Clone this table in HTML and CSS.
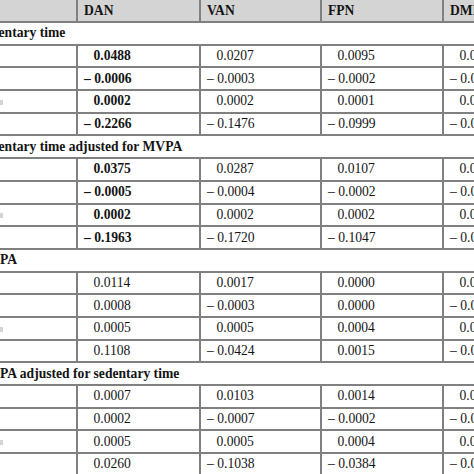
FILE: index.html
```html
<!DOCTYPE html>
<html>
<head>
<meta charset="utf-8">
<link rel="stylesheet" href="styles.css">
</head>
<body>
<div class="wrap">
<table class="grid">
<colgroup>
<col class="c0"><col class="c1"><col class="c2"><col class="c3"><col class="c4">
</colgroup>
<thead>
<tr class="head"><th></th><th>DAN</th><th>VAN</th><th>FPN</th><th>DMN</th></tr>
</thead>
<tbody>
<tr><td class="sec" colspan="5">Sedentary time</td></tr>
<tr><td class="lab"></td><td class="b p">0.0488</td><td class="p">0.0207</td><td class="p">0.0095</td><td class="p">0.0121</td></tr>
<tr><td class="lab"></td><td class="b">– 0.0006</td><td>– 0.0003</td><td>– 0.0002</td><td>– 0.0002</td></tr>
<tr><td class="lab"><span class="mark"></span></td><td class="b p">0.0002</td><td class="p">0.0002</td><td class="p">0.0001</td><td class="p">0.0001</td></tr>
<tr><td class="lab"></td><td class="b">– 0.2266</td><td>– 0.1476</td><td>– 0.0999</td><td>– 0.0812</td></tr>

<tr><td class="sec" colspan="5">Sedentary time adjusted for MVPA</td></tr>
<tr><td class="lab"></td><td class="b p">0.0375</td><td class="p">0.0287</td><td class="p">0.0107</td><td class="p">0.0133</td></tr>
<tr><td class="lab"></td><td class="b">– 0.0005</td><td>– 0.0004</td><td>– 0.0002</td><td>– 0.0002</td></tr>
<tr><td class="lab"><span class="mark"></span></td><td class="b p">0.0002</td><td class="p">0.0002</td><td class="p">0.0002</td><td class="p">0.0001</td></tr>
<tr><td class="lab"></td><td class="b">– 0.1963</td><td>– 0.1720</td><td>– 0.1047</td><td>– 0.0764</td></tr>

<tr><td class="sec" colspan="5">MVPA</td></tr>
<tr><td class="lab"></td><td class="p">0.0114</td><td class="p">0.0017</td><td class="p">0.0000</td><td class="p">0.0031</td></tr>
<tr><td class="lab"></td><td class="p">0.0008</td><td>– 0.0003</td><td class="p">0.0000</td><td>– 0.0001</td></tr>
<tr><td class="lab"><span class="mark"></span></td><td class="p">0.0005</td><td class="p">0.0005</td><td class="p">0.0004</td><td class="p">0.0002</td></tr>
<tr><td class="lab"></td><td class="p">0.1108</td><td>– 0.0424</td><td class="p">0.0015</td><td>– 0.0215</td></tr>

<tr><td class="sec" colspan="5">MVPA adjusted for sedentary time</td></tr>
<tr><td class="lab"></td><td class="p">0.0007</td><td class="p">0.0103</td><td class="p">0.0014</td><td class="p">0.0052</td></tr>
<tr><td class="lab"></td><td class="p">0.0002</td><td>– 0.0007</td><td>– 0.0002</td><td>– 0.0003</td></tr>
<tr><td class="lab"><span class="mark"></span></td><td class="p">0.0005</td><td class="p">0.0005</td><td class="p">0.0004</td><td class="p">0.0002</td></tr>
<tr><td class="lab"></td><td class="p">0.0260</td><td>– 0.1038</td><td>– 0.0384</td><td>– 0.0517</td></tr>
</tbody>
</table>
</div>
</body>
</html>
```
FILE: styles.css
```css
html, body {
  margin: 0;
  padding: 0;
  background: #ffffff;
}
body {
  overflow: hidden;
  font-family: "Liberation Serif", "Times New Roman", serif;
  font-size: 13.6px;
  color: #141414;
}
.wrap {
  width: 474px;
  height: 474px;
  overflow: hidden;
}
.grid {
  border-collapse: collapse;
  table-layout: fixed;
  width: 565px;
}
.c0 { width: 77px; }
.c1 { width: 123px; }
.c2 { width: 121px; }
.c3 { width: 122px; }
.c4 { width: 122px; }

.grid th,
.grid td {
  padding: 0 0 0 6px;
  text-align: left;
  vertical-align: middle;
  white-space: nowrap;
  overflow: hidden;
  border: 2px solid #808080;
  line-height: 14px;
}
.grid tr { height: 22.7px; }
.grid tr.head { height: 22px; }
.grid th {
  background: #d4d4d4;
  font-weight: bold;
  border-top: none;
}
.grid th:first-child,
.grid td:first-child {
  border-left: none;
}
.grid td.sec {
  font-weight: bold;
  padding-left: 0;
  text-indent: -22.6px;
  overflow: visible;
}
.grid td.p { padding-left: 15.5px; }
.grid td.b { font-weight: bold; }
.grid td.lab { padding-left: 0; }
.mark {
  display: inline-block;
  width: 3px;
  height: 5px;
  background: #d4d4d4;
  vertical-align: middle;
}
```
